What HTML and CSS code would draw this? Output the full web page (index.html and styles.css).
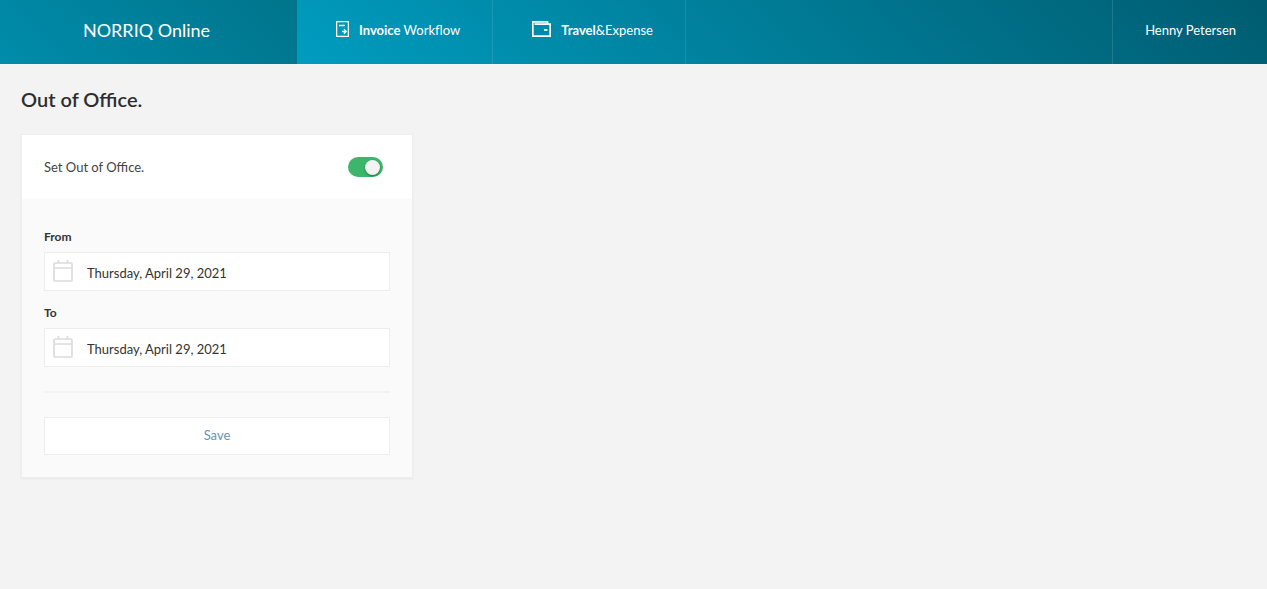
FILE: index.html
```html
<!DOCTYPE html>
<html lang="en">
<head>
  <meta charset="UTF-8" />
  <meta name="viewport" content="width=device-width, initial-scale=1.0" />
  <title>NORRIQ Online</title>
  <link rel="stylesheet" href="styles.css">
</head>
<body>
  <header class="topbar">
    <a class="brand" href="#">NORRIQ Online</a>
    <nav class="main-nav">
      <a class="nav-item" href="#">
        <svg class="nav-icon" width="13" height="16" viewBox="0 0 13 16">
          <path d="M.6.6h11.8v14.8H.6z M3 4.5h6" />
          <path d="M6 10.5h4 M8 8.3l2.2 2.2L8 12.7" />
        </svg>
        <span><b>Invoice</b> Workflow</span>
      </a>
      <a class="nav-item" href="#">
        <svg class="nav-icon wallet" width="19" height="16" viewBox="0 0 19 16">
          <path d="M15.5 3V.8H.8v14.4h17.4V3.2H2.5" />
          <path d="M12 9h3.5" />
        </svg>
        <span><b>Travel</b>&amp;Expense</span>
      </a>
      <a class="user" href="#">Henny Petersen</a>
    </nav>
  </header>

  <main class="content">
    <h1>Out of Office.</h1>

    <form class="card">
      <div class="card-head">
        <label for="outOfOffice">Set Out of Office.</label>
        <input class="switch" type="checkbox" id="outOfOffice" checked />
      </div>
      <div class="card-body">
        <label class="field-label" for="from">From</label>
        <div class="date-field">
          <svg class="calendar" width="20" height="22" viewBox="0 0 20 22">
            <rect x="1" y="3" width="18" height="18" rx="1" />
            <path d="M1 8h18 M5.5 0v3 M14.5 0v3" />
          </svg>
          <input type="text" id="from" value="Thursday, April 29, 2021" />
        </div>
        <label class="field-label" for="to">To</label>
        <div class="date-field">
          <svg class="calendar" width="20" height="22" viewBox="0 0 20 22">
            <rect x="1" y="3" width="18" height="18" rx="1" />
            <path d="M1 8h18 M5.5 0v3 M14.5 0v3" />
          </svg>
          <input type="text" id="to" value="Thursday, April 29, 2021" />
        </div>
        <hr />
        <button class="save" type="button">Save</button>
      </div>
    </form>
  </main>
</body>
</html>
```
FILE: styles.css
```css
* {
  box-sizing: border-box;
}

body {
  margin: 0;
  font-family: Lato, "Open Sans", sans-serif;
  font-size: 13px;
  line-height: 16px;
  color: #444;
  background: #f3f3f3;
}

a {
  color: #fff;
  text-decoration: none;
}

.topbar {
  display: flex;
  height: 64px;
}

.brand {
  display: flex;
  align-items: center;
  justify-content: center;
  width: 297px;
  padding: 0 4px 4px 0;
  font-size: 18px;
  background: linear-gradient(45deg, #008cab, #00748b);
}

.main-nav {
  display: flex;
  flex: 1;
  background: linear-gradient(45deg, #009cbf, #005c70);
}

.nav-item {
  display: flex;
  align-items: center;
  gap: 10px;
  padding: 0 32px 4px 39px;
  border-right: 1px solid rgba(255, 255, 255, 0.1);
}

.nav-icon {
  margin-bottom: 2px;
  fill: none;
  stroke: #fff;
  stroke-width: 1.3;
}

.nav-icon.wallet {
  stroke-width: 1.7;
}

.user {
  display: flex;
  align-items: center;
  margin-left: auto;
  padding: 0 31px 4px 32px;
  border-left: 1px solid rgba(255, 255, 255, 0.12);
}

.content {
  padding: 21px;
}

h1 {
  margin: 0 0 21px;
  font-size: 20px;
  font-weight: 600;
  line-height: 28px;
  color: #2d2d2d;
}

.card {
  max-width: 392px;
  background: #fafafa;
  border: 1px solid #eee;
  box-shadow: 0 1px 2px rgba(0, 0, 0, 0.05);
}

.card-head {
  display: flex;
  align-items: center;
  justify-content: space-between;
  height: 64px;
  padding: 0 29px 0 22px;
  background: #fff;
}

.switch {
  appearance: none;
  display: flex;
  width: 35px;
  height: 20px;
  margin: 0;
  padding: 3px;
  border-radius: 10px;
  background: #b5b5b5;
  cursor: pointer;
}

.switch::before {
  content: "";
  width: 15px;
  height: 15px;
  border-radius: 50%;
  background: #f3f3f3;
  box-shadow: 0 1px 2px rgba(0, 0, 0, 0.4);
}

.switch:checked {
  justify-content: flex-end;
  background: #3cb66b;
}

.card-body {
  padding: 30px 22px 22px;
}

.field-label {
  display: block;
  margin-bottom: 7px;
  font-size: 12px;
  font-weight: bold;
  color: #333;
}

.date-field {
  display: flex;
  align-items: center;
  height: 39px;
  margin-bottom: 14px;
  padding: 0 8px;
  gap: 14px;
  background: #fff;
  border: 1px solid #ededed;
}

.date-field input {
  flex: 1;
  min-width: 0;
  height: 37px;
  padding: 2px 0 0;
  border: none;
  outline: none;
  font: inherit;
  color: #333;
  background: none;
}

.calendar {
  margin-bottom: 2px;
  fill: none;
  stroke: #dcdcdc;
  stroke-width: 1.7;
}

hr {
  height: 2px;
  margin: 24px 0;
  border: none;
  background: #f3f3f3;
}

.save {
  display: block;
  width: 100%;
  height: 38px;
  padding: 0 0 2px;
  border: 1px solid #ededed;
  font: inherit;
  color: #6396b8;
  background: #fff;
  cursor: pointer;
}
```
